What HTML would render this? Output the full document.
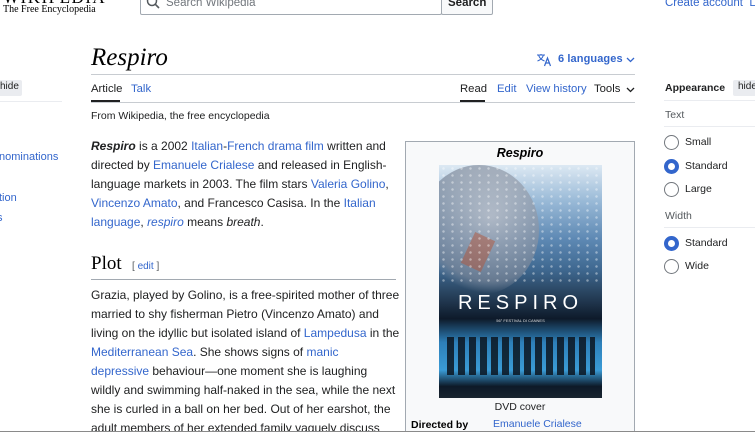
<!DOCTYPE html>
<html><head><meta charset="utf-8">
<style>
*{margin:0;padding:0;box-sizing:border-box}
html,body{width:755px;height:432px;overflow:hidden}
body{background:#fff;font-family:"Liberation Sans",Arial,sans-serif;color:#202122;position:relative}
.a{position:absolute;white-space:nowrap}
a,.l{color:#3366cc;text-decoration:none}
.ln{position:absolute;left:91px;font-size:12px;white-space:nowrap;line-height:19px}
.rad{position:absolute;width:15px;height:15px;border-radius:50%;border:1px solid #72777d;background:#fff}
.rad.on{border:4px solid #3366cc}
</style></head><body>

<div class="a" style="left:3px;top:-12px;font-family:'Liberation Serif',serif;font-size:17px;letter-spacing:1.5px;color:#000">WIKIPEDIA</div>
<div class="a" style="left:3px;top:4px;font-family:'Liberation Serif',serif;font-size:10px;color:#000">The Free Encyclopedia</div>

<div class="a" style="left:140px;top:-6px;width:302px;height:21px;border:1px solid #a2a9b1;border-radius:2px;background:#fff"></div>
<svg class="a" style="left:146px;top:-4px" width="14" height="14" viewBox="0 0 14 14"><circle cx="6" cy="5" r="4.5" fill="none" stroke="#54595d" stroke-width="1.5"/><path d="M9.2 8.2L13 12" stroke="#54595d" stroke-width="1.6"/></svg>
<div class="a" style="left:166px;top:-3px;font-size:11.5px;color:#72777d">Search Wikipedia</div>
<div class="a" style="left:441px;top:-6px;width:52px;height:21px;border:1px solid #a2a9b1;border-radius:2px;background:#f8f9fa"></div>
<div class="a" style="left:448px;top:-3px;font-size:11.5px;font-weight:bold;color:#202122">Search</div>

<div class="a l" style="left:665px;top:-3px;font-size:11.5px">Create account&nbsp; Log in</div>

<div class="a" style="left:91px;top:44px;font-family:'Liberation Serif',serif;font-style:italic;font-size:25px;color:#000">Respiro</div>
<svg class="a" style="left:536px;top:53px" width="16" height="14" viewBox="0 0 16 14"><path d="M1 2h8M5 1v1M2.5 2c1 3 3 5 6 6M7.5 2c-1 3-3 5-6 6" fill="none" stroke="#3366cc" stroke-width="1.1"/><path d="M8.5 13l3-8 3 8M9.7 10h3.6" fill="none" stroke="#3366cc" stroke-width="1.2"/></svg>
<div class="a" style="left:558px;top:53px;font-size:11px;font-weight:bold;color:#3366cc;letter-spacing:0.1px">6 languages</div>
<svg class="a" style="left:626px;top:57px" width="9" height="6" viewBox="0 0 9 6"><path d="M1 1l3.5 3.5L8 1" fill="none" stroke="#3366cc" stroke-width="1.3"/></svg>
<div class="a" style="left:91px;top:74px;width:544px;height:1px;background:#c8ccd1"></div>

<div class="a" style="left:91px;top:83px;font-size:11.3px;color:#202122">Article</div>
<div class="a" style="left:91px;top:100px;width:29px;height:2px;background:#202122"></div>
<div class="a l" style="left:131px;top:83px;font-size:11.3px">Talk</div>
<div class="a" style="left:460px;top:83px;font-size:11.3px;color:#202122">Read</div>
<div class="a" style="left:460px;top:100px;width:25px;height:2px;background:#202122"></div>
<div class="a l" style="left:497px;top:83px;font-size:11.3px">Edit</div>
<div class="a l" style="left:526px;top:83px;font-size:11.3px">View history</div>
<div class="a" style="left:594px;top:83px;font-size:11.3px;color:#202122">Tools</div>
<svg class="a" style="left:626px;top:87px" width="9" height="6" viewBox="0 0 9 6"><path d="M1 1l3.5 3.5L8 1" fill="none" stroke="#202122" stroke-width="1.3"/></svg>
<div class="a" style="left:91px;top:102px;width:544px;height:1px;background:#c8ccd1"></div>

<div class="a" style="left:91px;top:110px;font-size:10.5px;color:#202122">From Wikipedia, the free encyclopedia</div>

<div class="a" style="left:-8px;top:80px;width:30px;height:16px;background:#eaecf0;border-radius:2px"></div>
<div class="a" style="left:0px;top:81px;font-size:10px;color:#202122">hide</div>
<div class="a" style="left:0px;top:101px;width:62px;height:1px;background:#eaecf0"></div>
<div class="a l" style="left:-1px;top:151px;font-size:11px">nominations</div>
<div class="a l" style="left:-1px;top:192px;font-size:11px">tion</div>
<div class="a l" style="left:-3px;top:212px;font-size:11px">s</div>

<div class="ln" style="top:137px"><b><i>Respiro</i></b> is a 2002 <a>Italian</a>-<a>French</a> <a>drama film</a> written and</div>
<div class="ln" style="top:156px">directed by <a>Emanuele Crialese</a> and released in English-</div>
<div class="ln" style="top:175px">language markets in 2003. The film stars <a>Valeria Golino</a>,</div>
<div class="ln" style="top:194px"><a>Vincenzo Amato</a>, and Francesco Casisa. In the <a>Italian</a></div>
<div class="ln" style="top:213px"><a>language</a>, <i><a>respiro</a></i> means <i>breath</i>.</div>

<div class="a" style="left:91px;top:253px;font-family:'Liberation Serif',serif;font-size:19px;color:#000">Plot</div>
<div class="a" style="left:132px;top:261px;font-size:10px;color:#54595d">[ <span class="l">edit</span> ]</div>
<div class="a" style="left:91px;top:279px;width:305px;height:1px;background:#a2a9b1"></div>

<div class="ln" style="top:286px">Grazia, played by Golino, is a free-spirited mother of three</div>
<div class="ln" style="top:305px">married to shy fisherman Pietro (Vincenzo Amato) and</div>
<div class="ln" style="top:324px">living on the idyllic but isolated island of <a>Lampedusa</a> in the</div>
<div class="ln" style="top:343px"><a>Mediterranean Sea</a>. She shows signs of <a>manic</a></div>
<div class="ln" style="top:362px"><a>depressive</a> behaviour—one moment she is laughing</div>
<div class="ln" style="top:381px">wildly and swimming half-naked in the sea, while the next</div>
<div class="ln" style="top:400px">she is curled in a ball on her bed. Out of her earshot, the</div>
<div class="ln" style="top:419px">adult members of her extended family vaguely discuss</div>

<div class="a" style="left:405px;top:141px;width:230px;height:300px;background:#f8f9fa;border:1px solid #a2a9b1"></div>
<div class="a" style="left:405px;top:146px;width:230px;text-align:center;font-size:12.5px;font-weight:bold;font-style:italic;color:#000">Respiro</div>
<div class="a" style="left:439px;top:165px;width:163px;height:233px;overflow:hidden;background:linear-gradient(180deg,#dde9f3 0%,#9bbbd8 15%,#5d88b3 32%,#3f6890 45%,#26405a 56%,#0e1a2a 66%,#2d7fb8 76%,#3a9bd6 88%,#0d1a28 95%,#1a2530 100%)">
  <div style="position:absolute;left:-20px;top:0px;width:120px;height:130px;border-radius:50%;background:radial-gradient(circle at 60% 40%,#c4c2c6,#7c889a 60%,transparent 72%);opacity:.7"></div>
  <div style="position:absolute;left:28px;top:70px;width:22px;height:34px;background:#b4553a;opacity:.5;transform:rotate(25deg)"></div>
  <div style="position:absolute;inset:0;background-image:radial-gradient(circle,rgba(255,255,255,.8) 1px,transparent 1.5px);background-size:9px 7px;opacity:.5;height:120px"></div>
  <div style="position:absolute;left:0;top:127px;width:163px;text-align:center;font-size:20px;letter-spacing:5px;color:#fff;font-family:'Liberation Sans',sans-serif">RESPIRO</div>
  <div style="position:absolute;left:0;top:153px;width:163px;text-align:center;font-size:4px;color:#ddd">56° FESTIVAL DI CANNES</div>
  <div style="position:absolute;left:8px;top:172px;width:148px;height:38px;background:repeating-linear-gradient(90deg,#0b1520 0 7px,transparent 7px 11px);opacity:.85"></div>
</div>
<div class="a" style="left:405px;top:401px;width:230px;text-align:center;font-size:10.5px;color:#202122">DVD cover</div>
<div class="a" style="left:411px;top:419px;font-size:10.5px;font-weight:bold;color:#000">Directed by</div>
<div class="a l" style="left:493px;top:418px;font-size:10.5px">Emanuele Crialese</div>

<div class="a" style="left:665px;top:82px;font-size:10.5px;font-weight:bold;color:#202122">Appearance</div>
<div class="a" style="left:733px;top:80px;width:30px;height:16px;background:#eaecf0;border-radius:2px"></div>
<div class="a" style="left:738px;top:81px;font-size:10px;color:#202122">hide</div>
<div class="a" style="left:664px;top:100px;width:91px;height:1px;background:#eaecf0"></div>
<div class="a" style="left:665px;top:109px;font-size:10.5px;color:#54595d">Text</div>
<div class="a" style="left:664px;top:126px;width:91px;height:1px;background:#eaecf0"></div>
<div class="rad" style="left:664px;top:135px"></div><div class="a" style="left:685px;top:136px;font-size:10.5px">Small</div>
<div class="rad on" style="left:664px;top:159px"></div><div class="a" style="left:685px;top:160px;font-size:10.5px">Standard</div>
<div class="rad" style="left:664px;top:182px"></div><div class="a" style="left:685px;top:183px;font-size:10.5px">Large</div>
<div class="a" style="left:665px;top:210px;font-size:10.5px;color:#54595d">Width</div>
<div class="a" style="left:664px;top:227px;width:91px;height:1px;background:#eaecf0"></div>
<div class="rad on" style="left:664px;top:236px"></div><div class="a" style="left:685px;top:237px;font-size:10.5px">Standard</div>
<div class="rad" style="left:664px;top:259px"></div><div class="a" style="left:685px;top:260px;font-size:10.5px">Wide</div>

<div class="a" style="left:0;top:431px;width:755px;height:1px;background:#8a8a8a"></div>
</body></html>
